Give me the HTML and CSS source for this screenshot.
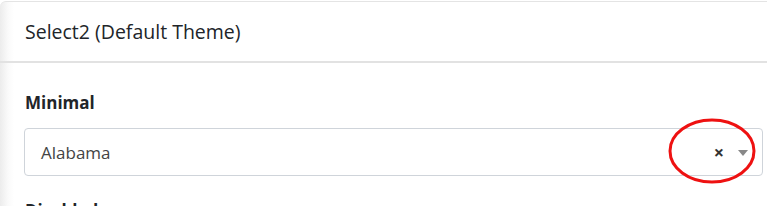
FILE: index.html
```html
<!DOCTYPE html>
<html lang="en">
<head>
    <meta charset="UTF-8">
    <title>Select2</title>
    <link rel="stylesheet" href="styles.css">
</head>
<body>
    <div class="card">
        <div class="card-header">
            <h3 class="card-title">Select2 (Default Theme)</h3>
        </div>
        <div class="card-body">
            <div class="form-group">
                <label>Minimal</label>
                <div class="select">
                    <span class="select-value">Alabama</span>
                    <span class="select-clear">&times;</span>
                    <span class="select-arrow"></span>
                    <svg class="circle" width="90" height="66" viewBox="0 0 90 66">
                        <ellipse cx="45" cy="33" rx="42" ry="31" fill="none" stroke="#ee1111" stroke-width="3"/>
                    </svg>
                </div>
            </div>
            <div class="form-group">
                <label>Disabled</label>
            </div>
        </div>
    </div>
</body>
</html>
```

FILE: styles.css
```css
body {
    margin: 0;
    padding-top: 1px;
    font-family: "Open Sans", sans-serif;
    color: #212529;
    background-color: #fff;
    overflow: hidden;
}
.card {
    border-top: 1px solid #e4e4e4;
    border-top-left-radius: 6px;
    background: linear-gradient(to right, #ececec, #fafafa 8px, #fff 14px);
}
.card-header {
    height: 59px;
    display: flex;
    align-items: center;
    padding: 0 25px;
    border-bottom: 2px solid #e2e2e2;
}
.card-title {
    margin: 0;
    font-size: 19.5px;
    line-height: 24px;
    font-weight: 400;
}
.card-body {
    padding: 29px 4px 0 24px;
}
.form-group {
    margin-bottom: 24px;
}
label {
    display: block;
    font-weight: 700;
    font-size: 17px;
    line-height: 22px;
    margin-bottom: 14px;
    padding-left: 1px;
}
.select {
    position: relative;
    height: 46px;
    border: 1px solid #cfd4da;
    border-radius: 4px;
    display: flex;
    align-items: center;
    padding: 0 14px 0 16px;
}
.select-value {
    flex: 1;
    font-size: 17px;
    color: #444;
}
.select-clear {
    font-size: 18px;
    font-weight: 700;
    color: #333;
    margin-right: 14px;
}
.select-arrow {
    width: 0;
    height: 0;
    border-left: 5px solid transparent;
    border-right: 5px solid transparent;
    border-top: 6px solid #888;
    margin-top: 2px;
}
.circle {
    position: absolute;
    right: 5px;
    top: -11px;
}
```
